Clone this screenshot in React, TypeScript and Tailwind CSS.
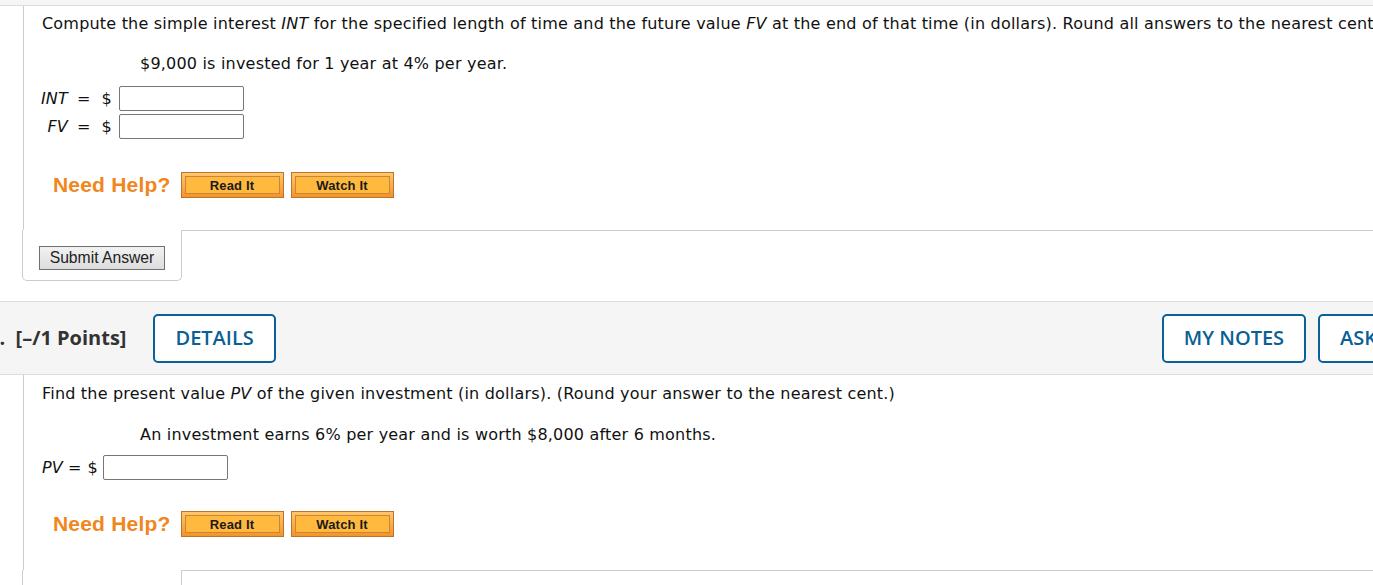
import React from "react";

const qFont = { fontFamily: '"DejaVu Sans", Verdana, sans-serif', letterSpacing: "0.2px" };

function HelpButton({ label }: { label: string }) {
  return (
    <button
      className="h-[26px] w-[103px] border border-[#bb7430] bg-gradient-to-b from-[#ffc76a] to-[#f49426] p-[3px]"
      style={{ fontFamily: '"Liberation Sans", Arial, sans-serif' }}
    >
      <span className="flex h-full w-full items-center justify-center border border-[#c98636] bg-[#ffb93f] text-[13px] font-bold leading-none text-[#1a1a1a]">
        {label}
      </span>
    </button>
  );
}

function NeedHelp() {
  return (
    <div className="flex h-[26px] items-center pl-[29px]">
      <span
        className="mr-[10px] text-[21px] font-bold text-[#f0861c]"
        style={{ fontFamily: '"Liberation Sans", Arial, sans-serif' }}
      >
        Need Help?
      </span>
      <div className="flex gap-[7px]">
        <HelpButton label="Read It" />
        <HelpButton label="Watch It" />
      </div>
    </div>
  );
}

function SubmitRow() {
  return (
    <div className="-ml-px flex">
      <div className="h-[51px] w-[160px] shrink-0 rounded-b-[5px] border-x border-b border-[#cccccc] pl-[16px] pt-[15px]">
        <button
          className="h-[24px] w-[126px] border border-[#707070] bg-gradient-to-b from-[#f2f2f2] to-[#dddddd] text-[15.7px] leading-none text-[#222]"
          style={{ fontFamily: '"Liberation Sans", Arial, sans-serif' }}
        >
          Submit Answer
        </button>
      </div>
      <div className="flex-1 border-t border-[#cccccc]" />
    </div>
  );
}

function Input({ gap = 7 }: { gap?: number }) {
  return (
    <span
      className="block h-[25px] w-[125px] shrink-0 rounded-[2px] border border-[#767676] bg-white"
      style={{ marginLeft: gap }}
    />
  );
}

function HeaderButton({ label }: { label: string }) {
  return (
    <button className="h-[49px] rounded-[5px] border-2 border-[#0a6098] bg-white px-[20px] text-[20px] font-semibold text-[#0a5f94]">
      {label}
    </button>
  );
}

export default function App() {
  return (
    <div className="h-[585px] w-[1373px] overflow-hidden bg-white text-[#111]">
      <div className="w-[1560px]">
        <div className="h-[6px] border-b border-[#dddddd] bg-[#f5f5f5]" />

        {/* Question 1 */}
        <div className="ml-[23px]">
          <div className="border-l border-[#cccccc] pl-[18px] pt-[8px]" style={qFont}>
            <p className="whitespace-nowrap text-[16px] leading-[20px]">
              Compute the simple interest <i>INT</i> for the specified length of time and the future value <i>FV</i> at the end of that time (in dollars). Round all answers to the nearest cent.
            </p>
            <p className="mt-[20px] pl-[98px] text-[16px] leading-[20px]">
              $9,000 is invested for 1 year at 4% per year.
            </p>
            <div className="mt-[12px] flex flex-col gap-[3px] text-[16px]">
              <div className="flex h-[25px] items-center">
                <span className="flex w-[70px] justify-end leading-[25px]">
                  <i>INT</i>
                  <span className="ml-[9px] mr-[11px]">=</span>$
                </span>
                <Input />
              </div>
              <div className="flex h-[25px] items-center">
                <span className="flex w-[70px] justify-end leading-[25px]">
                  <i>FV</i>
                  <span className="ml-[9px] mr-[11px]">=</span>$
                </span>
                <Input />
              </div>
            </div>
            <div className="-ml-[18px] pt-[33px] pb-[32px]">
              <NeedHelp />
            </div>
          </div>
          <SubmitRow />
        </div>

        {/* Header 2 */}
        <div
          className="mt-[20px] flex h-[74px] items-center border-y border-[#dddddd] bg-[#f5f5f5] pr-[8px]"
          style={{ fontFamily: '"Open Sans", sans-serif' }}
        >
          <span className="-ml-[12px] mr-[27px] text-[20px] font-bold text-[#333]">
            2.&nbsp; [–/1 Points]
          </span>
          <HeaderButton label="DETAILS" />
          <div className="ml-auto flex gap-[12px]">
            <HeaderButton label="MY NOTES" />
            <HeaderButton label="ASK YOUR TEACHER" />
          </div>
        </div>

        {/* Question 2 */}
        <div className="ml-[23px]">
          <div className="border-l border-[#cccccc] pl-[18px] pt-[9px]" style={qFont}>
            <p className="whitespace-nowrap text-[16px] leading-[20px]">
              Find the present value <i>PV</i> of the given investment (in dollars). (Round your answer to the nearest cent.)
            </p>
            <p className="mt-[21px] pl-[98px] text-[16px] leading-[20px]">
              An investment earns 6% per year and is worth $8,000 after 6 months.
            </p>
            <div className="mt-[10px] flex h-[25px] items-center text-[16px]">
              <span className="flex leading-[25px]">
                <i>PV</i>
                <span className="ml-[5px] mr-[6px]">=</span>$
              </span>
              <Input gap={5} />
            </div>
            <div className="-ml-[18px] pt-[31px] pb-[33px]">
              <NeedHelp />
            </div>
          </div>
          <SubmitRow />
        </div>
      </div>
    </div>
  );
}
